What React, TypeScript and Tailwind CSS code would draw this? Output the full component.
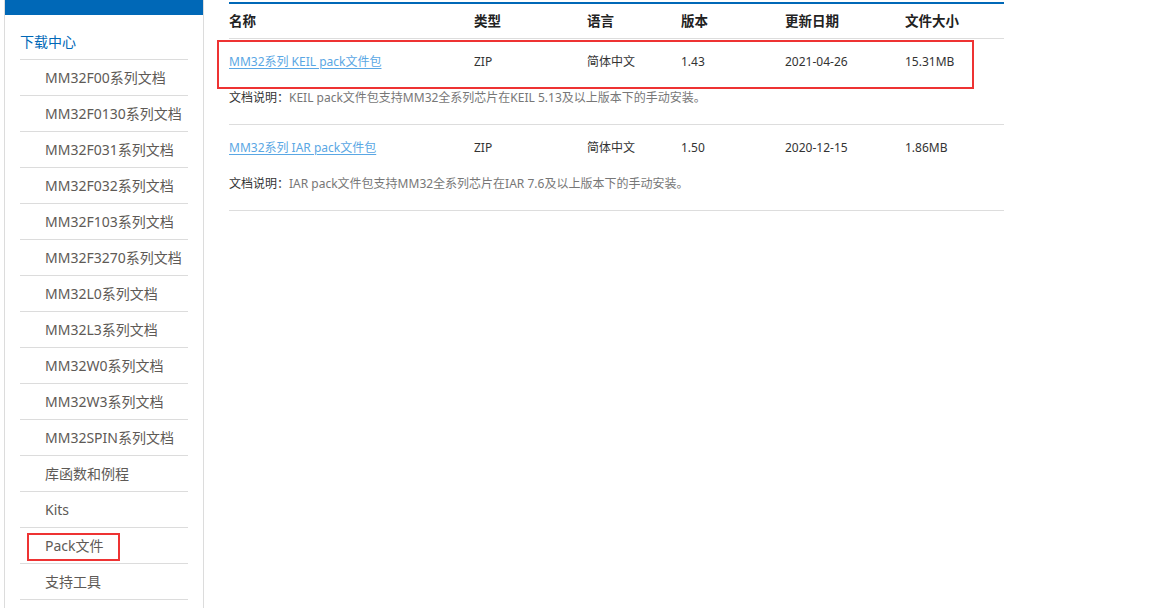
import React from 'react';

const menu = [
    'MM32F00系列文档',
    'MM32F0130系列文档',
    'MM32F031系列文档',
    'MM32F032系列文档',
    'MM32F103系列文档',
    'MM32F3270系列文档',
    'MM32L0系列文档',
    'MM32L3系列文档',
    'MM32W0系列文档',
    'MM32W3系列文档',
    'MM32SPIN系列文档',
    '库函数和例程',
    'Kits',
    'Pack文件',
    '支持工具',
];

const files = [
    {
        name: 'MM32系列 KEIL pack文件包',
        type: 'ZIP',
        lang: '简体中文',
        ver: '1.43',
        date: '2021-04-26',
        size: '15.31MB',
        desc: 'KEIL pack文件包支持MM32全系列芯片在KEIL 5.13及以上版本下的手动安装。',
        marked: true,
    },
    {
        name: 'MM32系列 IAR pack文件包',
        type: 'ZIP',
        lang: '简体中文',
        ver: '1.50',
        date: '2020-12-15',
        size: '1.86MB',
        desc: 'IAR pack文件包支持MM32全系列芯片在IAR 7.6及以上版本下的手动安装。',
        marked: false,
    },
];

const cols = 'grid grid-cols-[245px_113px_94px_104px_120px_99px]';

export default function App() {
    return (
        <div className="flex h-[608px] w-[1150px] overflow-hidden bg-white font-['Noto_Sans','Noto_Sans_CJK_SC',sans-serif]">
            {/* sidebar */}
            <div className="ml-[4px] w-[200px] shrink-0 border-x border-[#dcdcdc]">
                <div className="h-[15px] bg-[#0068b7]" />
                <div className="px-[15px] pt-[9px]">
                    <div className="flex h-[36px] items-center border-b border-[#dcdcdc] text-[14px] text-[#0068b7]">下载中心</div>
                    {menu.map((m) => (
                        <div key={m} className="relative flex h-[36px] items-center border-b border-[#dcdcdc] pl-[25px] text-[14px] text-[#5e5a56]">
                            {m}
                            {m === 'Pack文件' && (
                                <div className="absolute left-[7px] top-[5px] h-[28px] w-[93px] border-2 border-[#ee3333]" />
                            )}
                        </div>
                    ))}
                </div>
            </div>

            {/* main */}
            <div className="ml-[25px] w-[775px] pt-[2px]">
                <div className="border-t-2 border-[#0068b7]">
                    <div className={`${cols} h-[35px] items-center border-b border-[#dddddd] text-[13.5px] font-bold text-[#222]`}>
                        <div>名称</div>
                        <div>类型</div>
                        <div>语言</div>
                        <div>版本</div>
                        <div>更新日期</div>
                        <div>文件大小</div>
                    </div>
                    {files.map((f) => (
                        <div key={f.name} className="relative border-b border-[#dddddd] pt-[14px] pb-[17px] text-[12px] leading-[18px]">
                            <div className={`${cols} text-[#333]`}>
                                <div>
                                    <a href="#" className="text-[#5aa7e4] underline underline-offset-2">{f.name}</a>
                                </div>
                                <div>{f.type}</div>
                                <div>{f.lang}</div>
                                <div>{f.ver}</div>
                                <div>{f.date}</div>
                                <div>{f.size}</div>
                            </div>
                            <div className="mt-[18px] text-[#777]">
                                <span className="text-[#333]">文档说明：</span>
                                {f.desc}
                            </div>
                            {f.marked && (
                                <div className="absolute left-[-12px] top-[1px] h-[49px] w-[757px] border-2 border-[#ee3333]" />
                            )}
                        </div>
                    ))}
                </div>
            </div>
        </div>
    );
}
